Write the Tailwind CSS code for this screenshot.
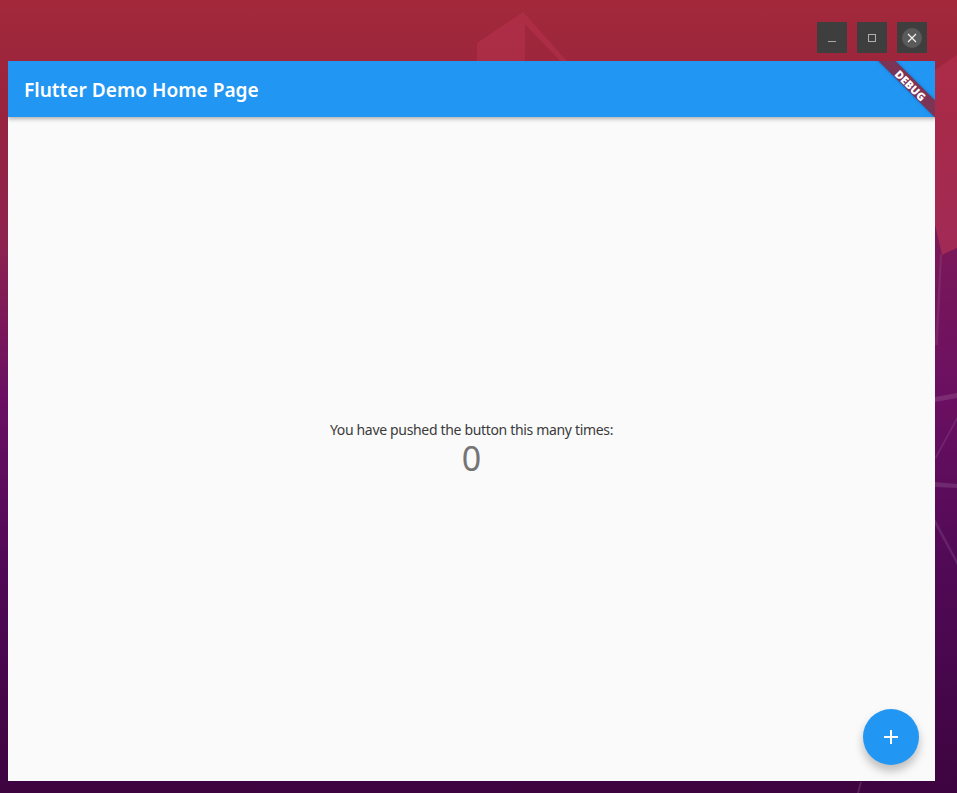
<!DOCTYPE html>
<html lang="en">
<head>
  <meta charset="UTF-8" />
  <meta name="viewport" content="width=device-width, initial-scale=1.0"/>
  <title>Flutter Demo Home Page</title>
  <script src="https://cdn.jsdelivr.net/npm/@tailwindcss/browser@4"></script>
</head>
<body class="relative h-[793px] overflow-hidden bg-[linear-gradient(180deg,#a3293a_0%,#97233f_15%,#8e2350_30%,#6a0f62_50%,#520a57_70%,#3d0440_100%)] font-['Noto_Sans',sans-serif]">

  <!-- wallpaper shapes -->
  <svg class="absolute inset-0" width="957" height="793" viewBox="0 0 957 793" fill="none">
    <path d="M477 43L523 12L567 61H560L525 24V61H477Z" fill="#c93a5e" fill-opacity="0.3"/>
    <path d="M935 70L957 55V248L942 255L935 225Z" fill="#c93a5e" fill-opacity="0.35"/>
    <path d="M935 225L942 255L957 248V420H935Z" fill="#6b1060" fill-opacity="0.55"/>
    <path d="M940 254H942L938 345H935Z" fill="#ffffff" fill-opacity="0.08"/>
    <path d="M935 397L957 393V398L935 402Z" fill="#ffffff" fill-opacity="0.12"/>
    <path d="M935 457L957 417V420L936 459Z" fill="#ffffff" fill-opacity="0.1"/>
    <path d="M935 482L957 484V488L935 487Z" fill="#ffffff" fill-opacity="0.12"/>
    <path d="M933 515L957 560V565L931 517Z" fill="#ffffff" fill-opacity="0.1"/>
    <path d="M860 782H862L859 793H857Z" fill="#ffffff" fill-opacity="0.12"/>
  </svg>

  <div class="relative">
    <!-- window controls -->
    <div class="flex h-[61px] items-start justify-end gap-[10px] pr-[30px] pt-[22px]">
      <button class="flex h-[31px] w-[30px] items-center justify-center bg-[#3e3e3e]">
        <svg width="10" height="10" viewBox="0 0 10 10"><path d="M1 8.5H9" stroke="#a8a8a8" stroke-width="1"/></svg>
      </button>
      <button class="flex h-[31px] w-[30px] items-center justify-center bg-[#3e3e3e]">
        <svg width="10" height="10" viewBox="0 0 10 10"><rect x="1.5" y="1.5" width="7" height="7" fill="none" stroke="#b0b0b0" stroke-width="1"/></svg>
      </button>
      <button class="flex h-[31px] w-[30px] items-center justify-center bg-[#3e3e3e]">
        <span class="flex h-5 w-5 items-center justify-center rounded-full bg-[#5a5a5a]">
          <svg width="10" height="10" viewBox="0 0 10 10"><path d="M1 1L9 9M9 1L1 9" stroke="#f0f0f0" stroke-width="1.2"/></svg>
        </span>
      </button>
    </div>

    <!-- app window -->
    <div class="relative ml-2 flex h-[720px] w-[927px] flex-col overflow-hidden bg-[#fafafa]">
      <header class="flex h-14 shrink-0 items-center bg-[#2196f3] px-4 pt-[2px] shadow-[0_2px_4px_rgba(0,0,0,0.3)]">
        <h1 class="text-[19.1px] font-semibold text-white">Flutter Demo Home Page</h1>
      </header>

      <main class="flex flex-1 flex-col items-center justify-center pb-[2px]">
        <p class="text-[14px] leading-[20px] tracking-[-0.33px] text-[#3a3a3a]">You have pushed the button this many times:</p>
        <p class="text-[34px] leading-[36px] text-[#757575]">0</p>
      </main>

      <!-- debug banner -->
      <div class="absolute right-[-22px] top-[18px] flex h-3 w-[92px] rotate-45 items-center justify-center bg-[#7b3356] shadow-[0_0_3px_rgba(0,0,0,0.3)]">
        <span class="text-[11px] font-black leading-none text-white">DEBUG</span>
      </div>

      <!-- fab -->
      <button class="absolute bottom-4 right-4 flex h-14 w-14 items-center justify-center rounded-full bg-[#2196f3] shadow-[0_6px_10px_rgba(0,0,0,0.25)]">
        <svg width="24" height="24" viewBox="0 0 24 24" fill="#ffffff"><path d="M19 13h-6v6h-2v-6H5v-2h6V5h2v6h6v2z"/></svg>
      </button>
    </div>
  </div>

</body>
</html>
